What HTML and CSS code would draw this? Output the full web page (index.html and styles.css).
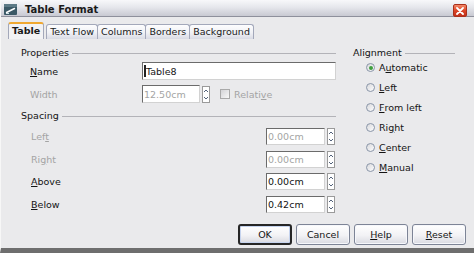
FILE: index.html
```html
<!DOCTYPE html>
<html>
<head>
<meta charset="utf-8">
<link rel="stylesheet" href="styles.css">
</head>
<body>
<div class="window">
  <div class="titlebar">
    <svg class="app-icon" viewBox="0 0 13 11" width="13" height="11">
      <rect x="0" y="0" width="13" height="11" rx="1" fill="#3b5966"/>
      <rect x="0" y="0" width="13" height="3" fill="#5d7a86"/>
      <path d="M2.5 8.5 L10.5 4.5" stroke="#fff" stroke-width="1.4" stroke-linecap="round"/>
      <path d="M2 9.5 H5" stroke="#cfe0e6" stroke-width="1"/>
    </svg>
    <span class="title">Table Format</span>
    <span class="close">
      <svg viewBox="0 0 8 8" width="8" height="8"><path d="M1 1 L7 7 M7 1 L1 7" stroke="#fff" stroke-width="1.8" stroke-linecap="round"/></svg>
    </span>
  </div>

  <div class="tabs">
    <span class="tab active">Table</span>
    <span class="tab">Text Flow</span>
    <span class="tab">Columns</span>
    <span class="tab">Borders</span>
    <span class="tab">Background</span>
  </div>

  <div class="panel">
    <div class="col-left">
      <div class="group-title">Properties</div>
      <div class="row name-row">
        <span class="lbl"><u>N</u>ame</span>
        <div class="field name-field"><span class="caret"></span>Table8</div>
      </div>
      <div class="row width-row">
        <span class="lbl disabled">Width</span>
        <div class="field num-field disabled">12.50cm</div>
        <svg class="spinner" viewBox="0 0 8 17" width="8" height="17">
          <rect x="0.5" y="0.5" width="7" height="16" fill="#fff" stroke="#9a9a9a"/>
          <path d="M2 6 L4 4 L6 6 M2 11 L4 13 L6 11" stroke="#53627a" stroke-width="1" fill="none"/>
        </svg>
        <span class="check"></span>
        <span class="check-label disabled">Relati<u>v</u>e</span>
      </div>

      <div class="group-title spacing-title">Spacing</div>
      <div class="row spin-row first">
        <span class="lbl wide-lbl disabled">Lef<u>t</u></span>
        <div class="field sp-field disabled">0.00cm</div>
        <svg class="spinner" viewBox="0 0 8 17" width="8" height="17">
          <rect x="0.5" y="0.5" width="7" height="16" fill="#fff" stroke="#9a9a9a"/>
          <path d="M2 6 L4 4 L6 6 M2 11 L4 13 L6 11" stroke="#53627a" stroke-width="1" fill="none"/>
        </svg>
      </div>
      <div class="row spin-row">
        <span class="lbl wide-lbl disabled">Ri<u>g</u>ht</span>
        <div class="field sp-field disabled">0.00cm</div>
        <svg class="spinner" viewBox="0 0 8 17" width="8" height="17">
          <rect x="0.5" y="0.5" width="7" height="16" fill="#fff" stroke="#9a9a9a"/>
          <path d="M2 6 L4 4 L6 6 M2 11 L4 13 L6 11" stroke="#53627a" stroke-width="1" fill="none"/>
        </svg>
      </div>
      <div class="row spin-row">
        <span class="lbl wide-lbl"><u>A</u>bove</span>
        <div class="field sp-field">0.00cm</div>
        <svg class="spinner" viewBox="0 0 8 17" width="8" height="17">
          <rect x="0.5" y="0.5" width="7" height="16" fill="#fff" stroke="#9a9a9a"/>
          <path d="M2 6 L4 4 L6 6 M2 11 L4 13 L6 11" stroke="#53627a" stroke-width="1" fill="none"/>
        </svg>
      </div>
      <div class="row spin-row">
        <span class="lbl wide-lbl"><u>B</u>elow</span>
        <div class="field sp-field">0.42cm</div>
        <svg class="spinner" viewBox="0 0 8 17" width="8" height="17">
          <rect x="0.5" y="0.5" width="7" height="16" fill="#fff" stroke="#9a9a9a"/>
          <path d="M2 6 L4 4 L6 6 M2 11 L4 13 L6 11" stroke="#53627a" stroke-width="1" fill="none"/>
        </svg>
      </div>
    </div>

    <div class="col-right">
      <div class="group-title">Alignment</div>
      <div class="radios">
        <div class="radio-row"><span class="radio on"></span>A<u>u</u>tomatic</div>
        <div class="radio-row"><span class="radio"></span><u>L</u>eft</div>
        <div class="radio-row"><span class="radio"></span><u>F</u>rom left</div>
        <div class="radio-row"><span class="radio"></span>Ri<u>g</u>ht</div>
        <div class="radio-row"><span class="radio"></span><u>C</u>enter</div>
        <div class="radio-row"><span class="radio"></span><u>M</u>anual</div>
      </div>
    </div>
  </div>

  <div class="buttons">
    <button class="btn default">OK</button>
    <button class="btn">Cancel</button>
    <button class="btn"><u>H</u>elp</button>
    <button class="btn"><u>R</u>eset</button>
  </div>
</div>
</body>
</html>
```

FILE: styles.css
```css
* { box-sizing: border-box; }
html, body { margin: 0; padding: 0; }
body {
  width: 474px;
  height: 253px;
  overflow: hidden;
  background: #e9e9eb;
  font-family: "DejaVu Sans", "Liberation Sans", sans-serif;
  font-size: 9.5px;
  color: #141414;
}
.window {
  height: 253px;
  display: flex;
  flex-direction: column;
  background: #eaeaec;
  border-bottom: 5px solid #6e6e6e;
  border-left: 1px solid #f7f7f7;
}
.titlebar {
  height: 17px;
  flex: none;
  display: flex;
  align-items: center;
  padding: 2px 7px 0 3px;
  border-bottom: 1px solid #8e909c;
  background: linear-gradient(#f8f8fa, #e6e7ec 45%, #c8c9d2);
}
.app-icon { flex: none; margin-right: 8px; }
.title { font-weight: bold; font-size: 10px; color: #1a1a1a; }
.close {
  margin-left: auto;
  align-self: flex-end;
  margin-bottom: -1px;
  width: 14px;
  height: 13px;
  border-radius: 2px;
  border: 1px solid #a9301c;
  background: linear-gradient(#f38a6a, #dc4526 50%, #c3301a);
  display: flex;
  align-items: center;
  justify-content: center;
}
.tabs {
  height: 22px;
  flex: none;
  display: flex;
  align-items: flex-end;
  padding-left: 7px;
}
.tab {
  height: 15px;
  line-height: 14px;
  padding: 0 3px;
  border: 1px solid #a3a8ba;
  border-bottom: none;
  border-radius: 3px 3px 0 0;
  background: linear-gradient(#fdfdfe, #f0f1f5 55%, #d9dbe4);
  color: #1a1a1a;
}
.tab + .tab { margin-left: -1px; }
.tab.active {
  height: 17px;
  font-weight: bold;
  background: #f2f2f4;
  border-top: 2px solid #f0a830;
  margin-right: 3px;
}
.panel {
  display: grid;
  grid-template-columns: 315px 102px;
  column-gap: 17px;
  padding: 8px 0 0 20px;
}
.group-title {
  display: flex;
  align-items: center;
  height: 12px;
  line-height: 12px;
}
.group-title::after {
  content: "";
  flex: 1;
  height: 1px;
  background: #b3b3b8;
  margin-left: 3px;
}
.row { display: flex; align-items: center; }
.lbl { flex: none; width: 121px; padding-left: 9px; }
.wide-lbl { width: 245px; padding-left: 10px; }
.name-row { margin-top: 3px; height: 18px; }
.width-row { margin-top: 5px; height: 18px; }
.spacing-title { margin-top: 7px; }
.spin-row { height: 17px; margin-top: 5.5px; }
.spin-row.first { margin-top: 6px; }
.field {
  height: 100%;
  display: flex;
  align-items: center;
  padding-left: 1px;
  background: #fff;
  border: 1px solid;
  border-color: #6b6b6b #d2d2d2 #d2d2d2 #6b6b6b;
  color: #141414;
}
.field.disabled { color: #a4a4a4; }
.name-field { width: 194px; }
.num-field { width: 58px; }
.sp-field { width: 59px; }
.caret {
  display: inline-block;
  width: 2px;
  height: 12px;
  background: #222;
  margin-right: 0;
}
.spinner { flex: none; margin-left: 2px; }
.check {
  flex: none;
  width: 10px;
  height: 10px;
  margin-left: 10px;
  border: 1px solid #a9a9a9;
  background: linear-gradient(135deg, #d3d3d6, #f8f8f8);
}
.check-label { margin-left: 4px; }
.disabled { color: #a4a4a4; }
.radios { margin-top: -1.5px; }
.radio-row {
  height: 20px;
  display: flex;
  align-items: center;
  padding-left: 13px;
}
.radio {
  flex: none;
  width: 9px;
  height: 9px;
  margin-right: 4px;
  border-radius: 50%;
  border: 1px solid #8995a8;
  background: linear-gradient(135deg, #d9d9dc, #fdfdfd);
  display: flex;
  align-items: center;
  justify-content: center;
}
.radio.on::after {
  content: "";
  width: 4px;
  height: 4px;
  border-radius: 50%;
  background: #3f9f3f;
}
.buttons {
  margin-top: auto;
  display: flex;
  justify-content: flex-end;
  gap: 4px;
  padding: 0 8px 3px 0;
}
.btn {
  width: 54px;
  height: 21px;
  padding: 0;
  font: inherit;
  color: #141414;
  border: 1px solid #7d8496;
  border-radius: 3px;
  background: linear-gradient(#ffffff, #f2f2f5 55%, #d9dae1);
  box-shadow: inset 0 0 0 1px #f6f7fb;
}
.btn.default {
  border: 2px solid #262626;
  box-shadow: inset 0 0 0 1px #c5d3ee;
}
```
